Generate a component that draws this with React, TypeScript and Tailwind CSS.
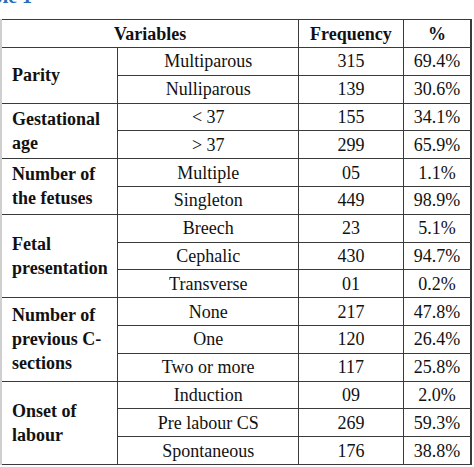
const groups = [
  {
    label: ['Parity'],
    rows: [
      ['Multiparous', '315', '69.4%'],
      ['Nulliparous', '139', '30.6%'],
    ],
  },
  {
    label: ['Gestational', 'age'],
    rows: [
      ['< 37', '155', '34.1%'],
      ['> 37', '299', '65.9%'],
    ],
  },
  {
    label: ['Number of', 'the fetuses'],
    rows: [
      ['Multiple', '05', '1.1%'],
      ['Singleton', '449', '98.9%'],
    ],
  },
  {
    label: ['Fetal', 'presentation'],
    rows: [
      ['Breech', '23', '5.1%'],
      ['Cephalic', '430', '94.7%'],
      ['Transverse', '01', '0.2%'],
    ],
  },
  {
    label: ['Number of', 'previous C-', 'sections'],
    rows: [
      ['None', '217', '47.8%'],
      ['One', '120', '26.4%'],
      ['Two or more', '117', '25.8%'],
    ],
  },
  {
    label: ['Onset of', 'labour'],
    rows: [
      ['Induction', '09', '2.0%'],
      ['Pre labour CS', '269', '59.3%'],
      ['Spontaneous', '176', '38.8%'],
    ],
  },
];

export default function App() {
  return (
    <div className="w-[474px] h-[467px] overflow-hidden bg-white text-[#111] font-['Liberation_Serif',serif]">
      <div className="h-[19px] overflow-hidden">
        <div className="-mt-[14px] -ml-[30px] text-[20px] font-bold leading-[20px] text-[#2a6db5]">Table 1</div>
      </div>
      <table className="w-[472px] border-collapse border-l-2 border-l-[#cfcfcf] text-[18px] leading-[24px]">
        <colgroup>
          <col className="w-[117px]" />
          <col className="w-[182px]" />
          <col className="w-[105px]" />
          <col className="w-[68px]" />
        </colgroup>
        <thead>
          <tr className="h-[28px]">
            <th colSpan={2} className="border border-[#3a3a3a] font-bold text-center">Variables</th>
            <th className="border border-[#3a3a3a] font-bold text-center">Frequency</th>
            <th className="border border-[#3a3a3a] border-r-2 font-bold text-center">%</th>
          </tr>
        </thead>
        <tbody>
          {groups.map((g) =>
            g.rows.map((r, i) => (
              <tr key={g.label.join() + i} className="h-[27.8px]">
                {i === 0 && (
                  <td
                    rowSpan={g.rows.length}
                    className="border border-[#3a3a3a] border-l-0 pl-[10px] align-middle font-bold"
                  >
                    {g.label.map((l) => (
                      <div key={l}>{l}</div>
                    ))}
                  </td>
                )}
                <td className="border border-[#3a3a3a] p-0 text-center">{r[0]}</td>
                <td className="border border-[#3a3a3a] p-0 text-center">{r[1]}</td>
                <td className="border border-[#3a3a3a] border-r-2 p-0 text-center">{r[2]}</td>
              </tr>
            ))
          )}
        </tbody>
      </table>
    </div>
  );
}
